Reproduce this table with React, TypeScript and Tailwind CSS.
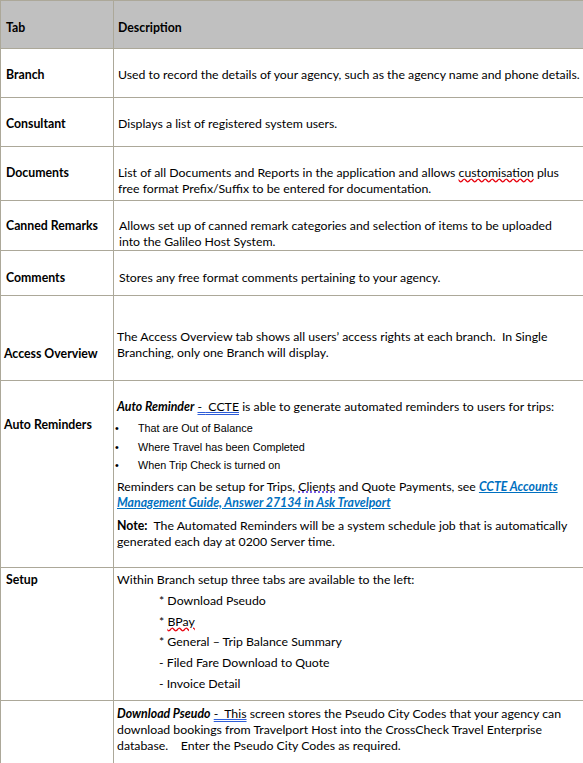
import React from "react";

const cal = "font-['Lato','Open_Sans',sans-serif] text-[12.3px] leading-4 text-black";

function Row({
  h,
  label,
  labelPad,
  children,
  header = false,
}: {
  h: string;
  label?: string;
  labelPad: string;
  children: React.ReactNode;
  header?: boolean;
}) {
  return (
    <div className={`flex ${h} border-b border-[#aca899] ${header ? "bg-[#c0c0c0]" : ""}`}>
      <div className={`w-[113px] shrink-0 border-r border-[#aca899] pl-[5px] ${labelPad} font-bold`}>{label}</div>
      <div className="flex-1 pl-[3px] whitespace-nowrap">{children}</div>
    </div>
  );
}

export default function App() {
  return (
    <div className="w-[583px] h-[763px] overflow-hidden bg-white">
      <div className={`w-[600px] border-t border-l border-[#aca899] ${cal}`}>
        <Row h="h-[48px]" label="Tab" labelPad="pt-[19px]" header>
          <div className="pt-[19px] pl-[1px] font-bold">Description</div>
        </Row>
        <Row h="h-[49px]" label="Branch" labelPad="pt-[18px]">
          <div className="pt-[18px] pl-[1px]">
            Used to record the details of your agency, such as the agency name and phone details.
          </div>
        </Row>
        <Row h="h-[49px]" label="Consultant" labelPad="pt-[18px]">
          <div className="pt-[18px] pl-[1px]">Displays a list of registered system users.</div>
        </Row>
        <Row h="h-[54px]" label="Documents" labelPad="pt-[18px]">
          <div className="pt-[18px] pl-[1px]">
            List of all Documents and Reports in the application and allows{" "}
            <span className="underline decoration-wavy decoration-red-600">customisation</span> plus
            <br />
            free format Prefix/Suffix to be entered for documentation.
          </div>
        </Row>
        <Row h="h-[50px]" label="Canned Remarks" labelPad="pt-[17px]">
          <div className="pt-[17px] pl-[2px]">
            Allows set up of canned remark categories and selection of items to be uploaded
            <br />
            into the Galileo Host System.
          </div>
        </Row>
        <Row h="h-[45px]" label="Comments" labelPad="pt-[19px]">
          <div className="pt-[19px] pl-[2px]">Stores any free format comments pertaining to your agency.</div>
        </Row>
        <Row h="h-[85px]" label="Access Overview" labelPad="pt-[50px] !pl-[3px]">
          <div className="pt-[33px]">
            The Access Overview tab shows all users’ access rights at each branch.&nbsp; In Single
            <br />
            Branching, only one Branch will display.
          </div>
        </Row>
        <Row h="h-[187px]" label="Auto Reminders" labelPad="pt-[36px] !pl-[3px]">
          <div className="pt-[18px]">
            <p>
              <span className="font-bold italic">Auto Reminder</span>{" "}
              <span className="underline decoration-double decoration-[#2e5dd8]">-&nbsp;</span>
              <span className="underline decoration-double decoration-[#2e5dd8]"> CCTE</span> is able to generate
              automated reminders to users for trips:
            </p>
            <ul className="mt-[4px] -ml-[2px] font-['Liberation_Sans',Arial,sans-serif] text-[10.8px]">
              {["That are Out of Balance", "Where Travel has been Completed", "When Trip Check is turned on"].map(
                (t) => (
                  <li key={t} className="flex h-[18.5px] items-center">
                    <span className="w-[23px]">•</span>
                    <span>{t}</span>
                  </li>
                )
              )}
            </ul>
            <p className="mt-[4px]">
              Reminders can be setup for Trips,{" "}
              <span className="underline decoration-dotted decoration-[#7b5ce6] decoration-2">Clients</span> and
              Quote Payments, see{" "}
              <span className="font-bold italic text-[#0070c0] underline">CCTE Accounts</span>
              <br />
              <span className="font-bold italic text-[#0070c0] underline">
                Management Guide, Answer 27134 in Ask Travelport
              </span>
            </p>
            <p className="mt-[7px]">
              <span className="font-bold">Note:</span>&nbsp; The Automated Reminders will be a system schedule job
              that is automatically
              <br />
              generated each day at 0200 Server time.
            </p>
          </div>
        </Row>
        <Row h="h-[133px]" label="Setup" labelPad="pt-[4px]">
          <div className="pt-[4px] flex flex-col gap-[4.8px]">
            <p>Within Branch setup three tabs are available to the left:</p>
            <p className="pl-[42px]">* Download Pseudo</p>
            <p className="pl-[42px]">
              * <span className="underline decoration-wavy decoration-red-600">BPay</span>
            </p>
            <p className="pl-[42px]">* General – Trip Balance Summary</p>
            <p className="pl-[42px]">- Filed Fare Download to Quote</p>
            <p className="pl-[42px]">- Invoice Detail</p>
          </div>
        </Row>
        <Row h="h-[80px]" labelPad="">
          <div className="pt-[5px]">
            <span className="font-bold italic">Download Pseudo</span>{" "}
            <span className="underline decoration-double decoration-[#2e5dd8]">-&nbsp; This</span> screen stores
            the Pseudo City Codes that your agency can
            <br />
            download bookings from Travelport Host into the CrossCheck Travel Enterprise
            <br />
            database.&nbsp;&nbsp;&nbsp; Enter the Pseudo City Codes as required.
          </div>
        </Row>
      </div>
    </div>
  );
}
